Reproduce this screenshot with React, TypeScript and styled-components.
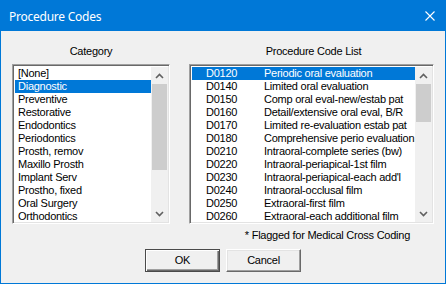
import React from 'react';
import styled, { createGlobalStyle } from 'styled-components';

const Global = createGlobalStyle`
  html, body { margin: 0; padding: 0; background: #f0f0f0; }
  body { width: 446px; height: 284px; overflow: hidden; }
`;

const Window = styled.div`
  width: 446px;
  height: 284px;
  box-sizing: border-box;
  border: 1px solid #0078d7;
  background: #f0f0f0;
  display: flex;
  flex-direction: column;
  font-family: "Liberation Sans", Arial, sans-serif;
  font-size: 11px;
  letter-spacing: -0.25px;
  color: #000;
`;

const TitleBar = styled.div`
  height: 30px;
  flex: none;
  background: #0078d7;
  color: #fff;
  display: flex;
  align-items: center;
  justify-content: space-between;
  padding: 0 10px 0 8px;
  font-family: "Noto Sans", "Open Sans", sans-serif;
  font-size: 12px;
`;

const Title = styled.span`
  line-height: 16px;
  margin-top: 2px;
`;

const Content = styled.div`
  flex: 1;
  padding: 14px 11px 0 11px;
  display: flex;
  flex-direction: column;
`;

const Panels = styled.div`
  display: grid;
  grid-template-columns: 158px 245px;
  column-gap: 19px;
`;

const Panel = styled.div`
  display: flex;
  flex-direction: column;
`;

const Label = styled.div<{ $shift?: number }>`
  text-align: center;
  line-height: 13px;
  margin-bottom: 6px;
  padding-left: ${(p) => p.$shift ?? 0}px;
`;

const ListBox = styled.div`
  height: 160px;
  box-sizing: border-box;
  background: #fff;
  border-style: solid;
  border-width: 1px;
  border-color: #a0a0a0 #fff #fff #a0a0a0;
  box-shadow: inset 1px 1px 0 #696969, inset -1px -1px 0 #e3e3e3;
  padding: 2px 1px 1px 2px;
  display: flex;
`;

const Items = styled.div`
  flex: 1;
  min-width: 0;
  display: flex;
  flex-direction: column;
`;

const Row = styled.div<{ $selected?: boolean }>`
  height: 13px;
  line-height: 13px;
  flex: none;
  padding-left: 3px;
  white-space: nowrap;
  overflow: hidden;
  display: flex;
  background: ${(p) => (p.$selected ? '#0078d7' : 'transparent')};
  color: ${(p) => (p.$selected ? '#fff' : '#000')};
`;

const Code = styled.span`
  width: 58px;
  padding-left: 11px;
  flex: none;
`;

const ScrollBar = styled.div`
  width: 17px;
  flex: none;
  background: #f0f0f0;
  display: flex;
  flex-direction: column;
`;

const ArrowBox = styled.div`
  height: 17px;
  flex: none;
  display: flex;
  align-items: center;
  justify-content: center;
`;

const Track = styled.div`
  flex: 1;
  display: flex;
  flex-direction: column;
`;

const Thumb = styled.div<{ $size: number }>`
  height: ${(p) => p.$size}px;
  margin: 0 1px;
  background: #cdcdcd;
`;

const Footnote = styled.div`
  margin-top: 5px;
  line-height: 13px;
  text-align: right;
  padding-right: 24px;
`;

const Buttons = styled.div`
  margin-top: 7px;
  display: flex;
  justify-content: center;
  gap: 6px;
`;

const Button = styled.div<{ $default?: boolean }>`
  width: 75px;
  height: 23px;
  box-sizing: border-box;
  display: flex;
  align-items: center;
  justify-content: center;
  background: #f0f0f0;
  border-style: solid;
  border-width: 1px;
  border-color: ${(p) => (p.$default ? '#4a4a4a' : '#fff #696969 #696969 #fff')};
  box-shadow: ${(p) =>
    p.$default
      ? 'inset 1px 1px 0 #fff, inset -1px -1px 0 #696969, inset -2px -2px 0 #a0a0a0'
      : 'inset -1px -1px 0 #a0a0a0, inset 1px 1px 0 #e3e3e3'};
  line-height: 13px;
`;

const Chevron = ({ up }: { up?: boolean }) => (
  <svg width="9" height="6" viewBox="0 0 9 6">
    <polyline
      points={up ? '1,5 4.5,1.5 8,5' : '1,1 4.5,4.5 8,1'}
      fill="none"
      stroke="#606060"
      strokeWidth="1.6"
    />
  </svg>
);

const Scroll = ({ thumb }: { thumb: number }) => (
  <ScrollBar>
    <ArrowBox>
      <Chevron up />
    </ArrowBox>
    <Track>
      <Thumb $size={thumb} />
    </Track>
    <ArrowBox>
      <Chevron />
    </ArrowBox>
  </ScrollBar>
);

const categories = [
  '[None]',
  'Diagnostic',
  'Preventive',
  'Restorative',
  'Endodontics',
  'Periodontics',
  'Prosth, remov',
  'Maxillo Prosth',
  'Implant Serv',
  'Prostho, fixed',
  'Oral Surgery',
  'Orthodontics',
];

const codes: [string, string][] = [
  ['D0120', 'Periodic oral evaluation'],
  ['D0140', 'Limited oral evaluation'],
  ['D0150', 'Comp oral eval-new/estab pat'],
  ['D0160', 'Detail/extensive oral eval, B/R'],
  ['D0170', 'Limited re-evaluation estab pat'],
  ['D0180', 'Comprehensive perio evaluation'],
  ['D0210', 'Intraoral-complete series (bw)'],
  ['D0220', 'Intraoral-periapical-1st film'],
  ['D0230', "Intraoral-periapical-each add'l"],
  ['D0240', 'Intraoral-occlusal film'],
  ['D0250', 'Extraoral-first film'],
  ['D0260', 'Extraoral-each additional film'],
];

export default function App() {
  return (
    <>
      <Global />
      <Window>
        <TitleBar>
          <Title>Procedure Codes</Title>
          <svg width="10" height="10" viewBox="0 0 10 10">
            <path d="M0.5 0.5 L9.5 9.5 M9.5 0.5 L0.5 9.5" stroke="#fff" strokeWidth="1.1" />
          </svg>
        </TitleBar>
        <Content>
          <Panels>
            <Panel>
              <Label>Category</Label>
              <ListBox>
                <Items>
                  {categories.map((c, i) => (
                    <Row key={c} $selected={i === 1}>
                      {c}
                    </Row>
                  ))}
                </Items>
                <Scroll thumb={86} />
              </ListBox>
            </Panel>
            <Panel>
              <Label $shift={4}>Procedure Code List</Label>
              <ListBox>
                <Items>
                  {codes.map(([code, desc], i) => (
                    <Row key={code} $selected={i === 0}>
                      <Code>{code}</Code>
                      <span>{desc}</span>
                    </Row>
                  ))}
                </Items>
                <Scroll thumb={38} />
              </ListBox>
            </Panel>
          </Panels>
          <Footnote>* Flagged for Medical Cross Coding</Footnote>
          <Buttons>
            <Button $default>OK</Button>
            <Button>Cancel</Button>
          </Buttons>
        </Content>
      </Window>
    </>
  );
}
